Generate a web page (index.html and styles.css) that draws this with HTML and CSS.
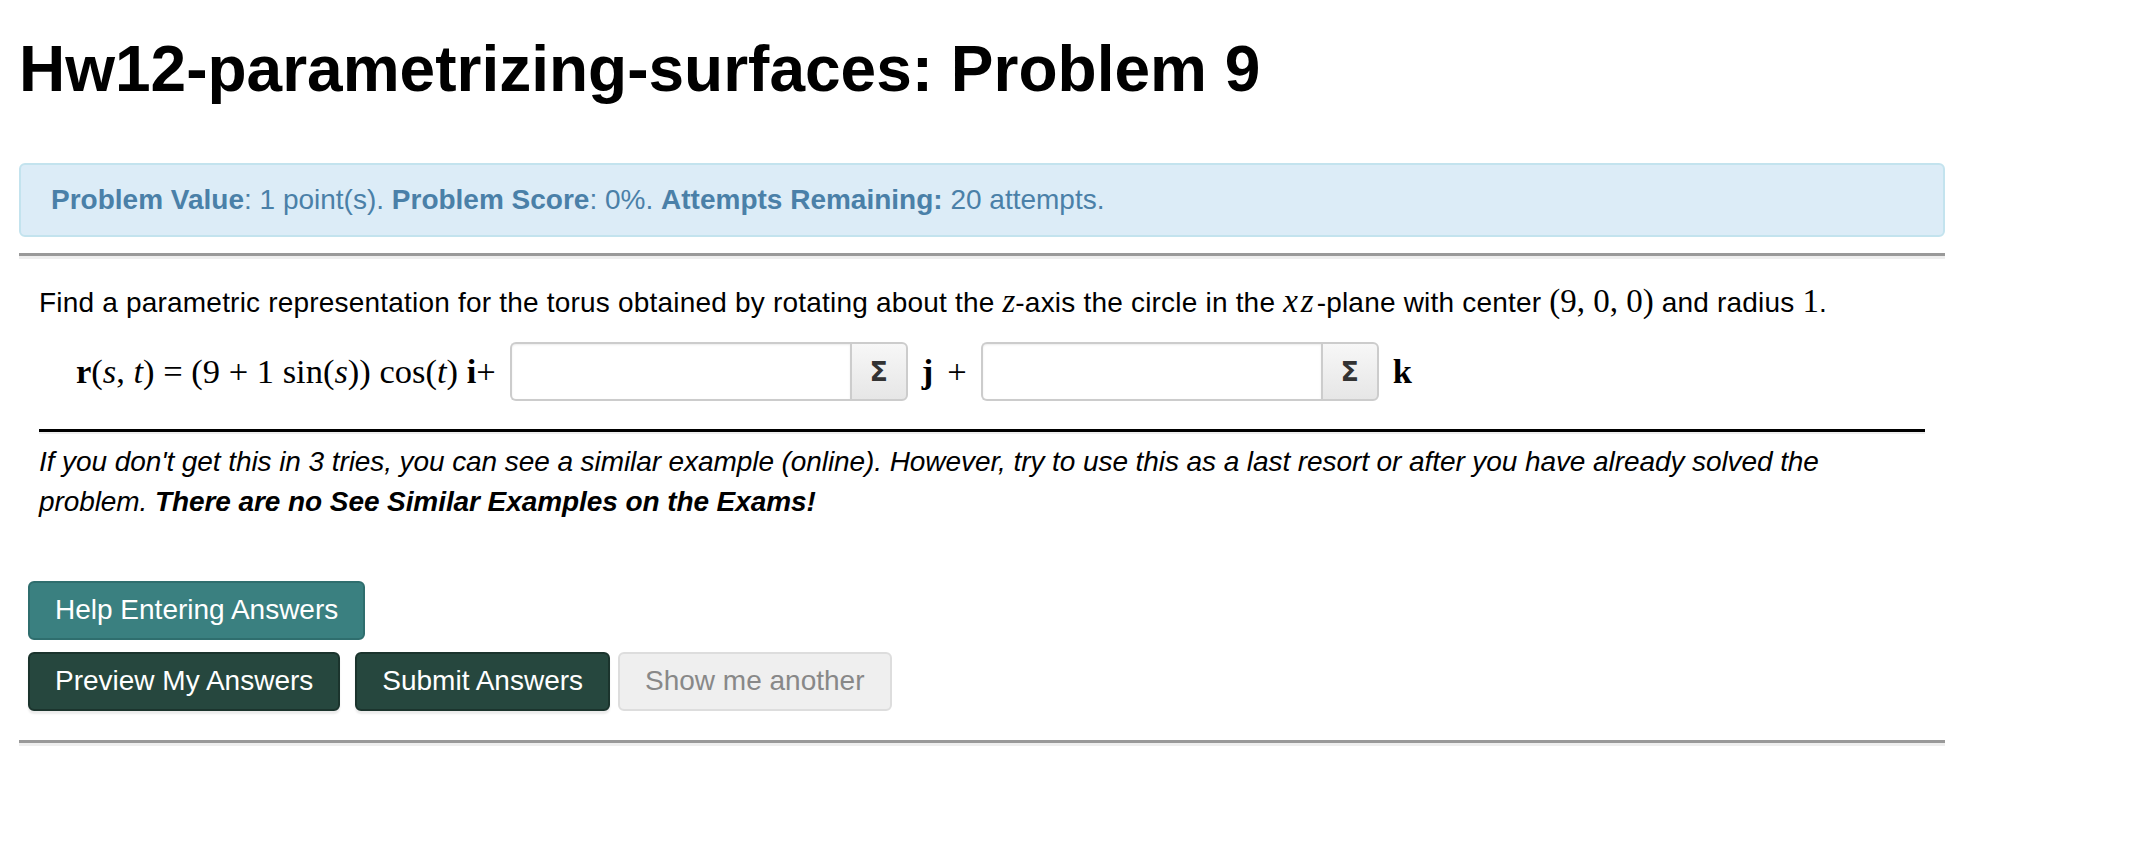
FILE: index.html
```html
<!DOCTYPE html>
<html lang="en">
<head>
    <meta charset="UTF-8">
    <title>Hw12-parametrizing-surfaces: Problem 9</title>
    <link rel="stylesheet" href="styles.css">
</head>
<body>

<div class="page">
    <h1 class="problem-title">Hw12-parametrizing-surfaces: Problem 9</h1>

    <div class="alert-info">
        <b>Problem Value</b>: 1 point(s). <b>Problem Score</b>: 0%. <b>Attempts Remaining:</b> 20 attempts.
    </div>

    <hr class="rule-gray">

    <div class="problem">
        <p class="statement">Find a parametric representation for the torus obtained by rotating about the <span class="math"><i>z</i></span>-axis the circle in the <span class="math"><i class="wide">xz</i></span>-plane with center <span class="math">(9, 0, 0)</span> and radius <span class="math">1</span>.</p>

        <div class="eq-row">
            <span class="math eq"><b>r</b>(<i>s</i>, <i>t</i>) = (9 + 1 sin(<i>s</i>)) cos(<i>t</i>) <b>i</b>+</span>
            <span class="answer">
                <input type="text" class="answer-input">
                <button class="sigma">Σ</button>
            </span>
            <span class="math eq"><b>j</b><span class="plus">+</span></span>
            <span class="answer">
                <input type="text" class="answer-input">
                <button class="sigma">Σ</button>
            </span>
            <span class="math eq"><b>k</b></span>
        </div>

        <hr class="rule-black">

        <p class="hint">If you don't get this in 3 tries, you can see a similar example (online). However, try to use this as a last resort or after you have already solved the problem. <b>There are no See Similar Examples on the Exams!</b></p>
    </div>

    <div class="actions">
        <div class="btn-row">
            <button class="btn btn-help">Help Entering Answers</button>
        </div>
        <div class="btn-row">
            <button class="btn btn-dark">Preview My Answers</button>
            <button class="btn btn-dark">Submit Answers</button>
            <button class="btn btn-disabled">Show me another</button>
        </div>
    </div>

    <hr class="rule-gray rule-bottom">
</div>

</body>
</html>
```

FILE: styles.css
```css
body {
    font-family: "Liberation Sans", Arial, sans-serif;
    font-size: 28px;
    line-height: 1.5;
    margin: 0;
    padding: 0;
    color: #000;
    background: #fff;
}
.page {
    width: 1926px;
    padding-left: 19px;
    padding-top: 34px;
}
.problem-title {
    font-size: 64px;
    font-weight: bold;
    line-height: 1.1;
    margin: 0 0 59px 0;
}
.alert-info {
    background-color: #dcecf7;
    border: 2px solid #c3e3ee;
    border-radius: 6px;
    color: #4a80a8;
    padding: 14px 30px;
}
.rule-gray {
    border: none;
    border-top: 3px solid #999;
    border-bottom: 3px solid #eee;
    margin: 16px 0 0 0;
}
.problem {
    padding: 0 20px;
}
.statement {
    letter-spacing: 0.2px;
    margin: 18px 0 0 0;
}
.math {
    font-family: "Liberation Serif", "Times New Roman", serif;
    font-size: 33px;
    letter-spacing: 0;
}
.wide {
    letter-spacing: 3px;
}
.eq-row {
    display: flex;
    align-items: center;
    gap: 14px;
    margin: 15px 0 0 0;
    padding-left: 37px;
}
.eq {
    font-size: 34.5px;
}
.plus {
    margin-left: 14px;
}
.answer {
    display: flex;
}
.answer-input {
    width: 340px;
    height: 59px;
    box-sizing: border-box;
    border: 2px solid #ccc;
    border-right: none;
    border-radius: 6px 0 0 6px;
    box-shadow: inset 0 1px 2px rgba(0, 0, 0, 0.08);
    font-size: 26px;
}
.sigma {
    width: 58px;
    height: 59px;
    border: 2px solid #ccc;
    border-radius: 0 6px 6px 0;
    background: linear-gradient(#f7f7f7, #e6e6e6);
    font-family: "DejaVu Sans", sans-serif;
    font-weight: bold;
    font-size: 27px;
    color: #333;
}
.rule-black {
    border: none;
    border-top: 3px solid #000;
    border-bottom: 2px solid #eee;
    margin: 28px 0 0 0;
}
.hint {
    font-style: italic;
    line-height: 40px;
    letter-spacing: -0.08px;
    margin: 8px 0 0 0;
    width: 1860px;
}
.actions {
    display: flex;
    flex-direction: column;
    gap: 12px;
    margin-top: 59px;
    padding-left: 9px;
}
.btn-row {
    display: flex;
    gap: 15px;
}
.btn {
    font-family: "Liberation Sans", Arial, sans-serif;
    font-size: 28px;
    height: 59px;
    padding: 0 25px;
    border-radius: 6px;
    color: #fff;
    border: 2px solid transparent;
}
.btn-help {
    background-color: #3a8080;
    border-color: #2f6e6e;
}
.btn-dark {
    background-color: #26473e;
    border-color: #1b342d;
    box-shadow: 0 3px 2px rgba(0, 0, 0, 0.08);
}
.btn-disabled {
    margin-left: -7px;
    background-color: #efefef;
    border-color: #ddd;
    color: #888;
}
.rule-bottom {
    margin-top: 29px;
}
```
